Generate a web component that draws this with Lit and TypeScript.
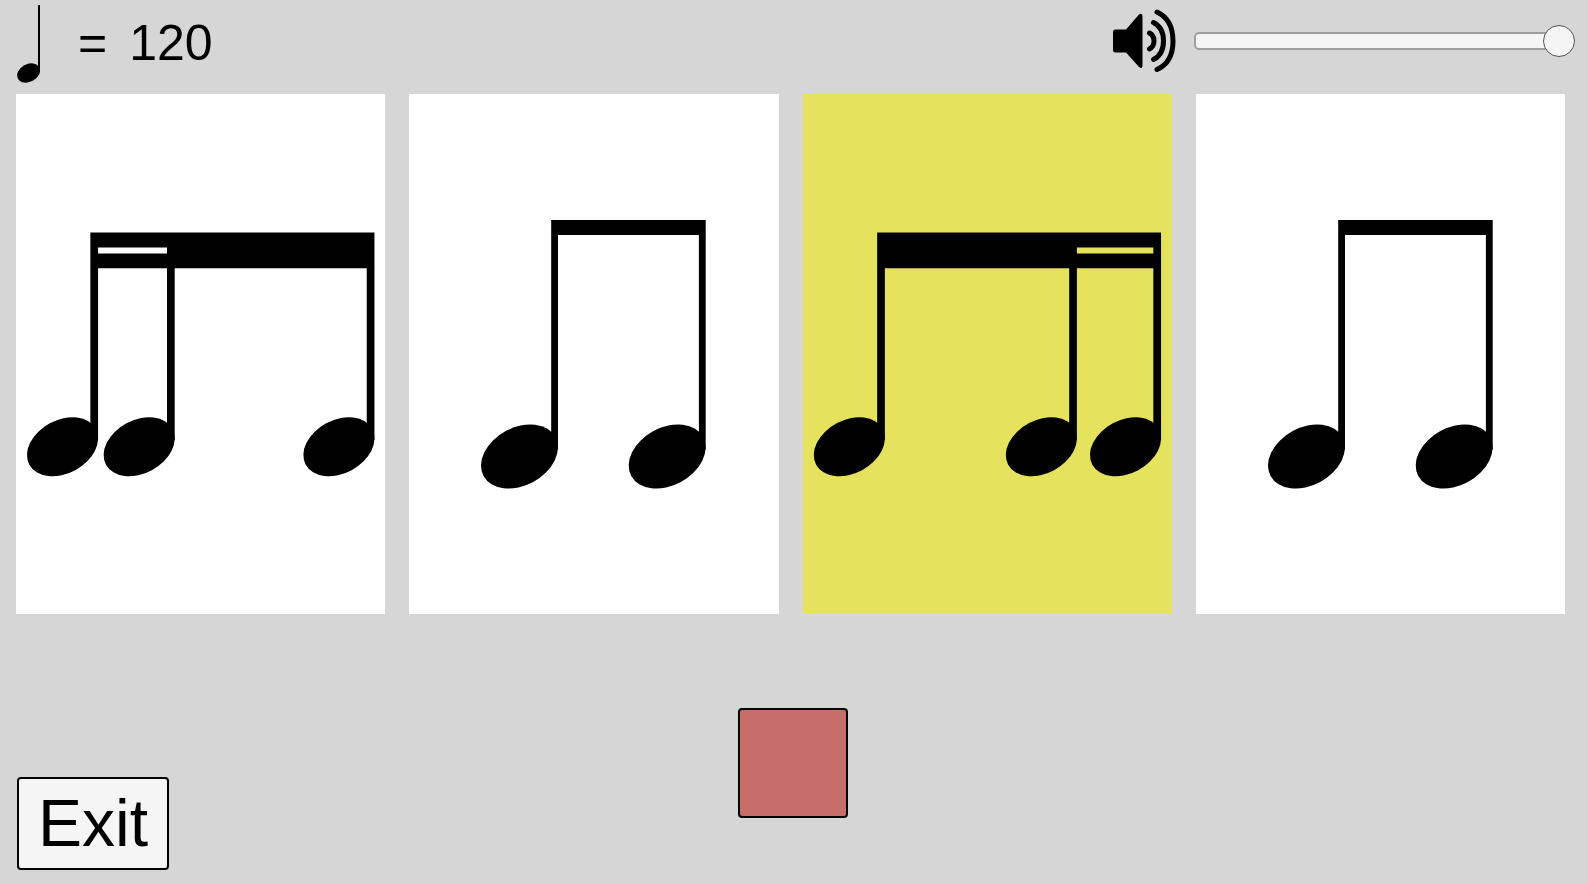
import { LitElement, html, svg, css } from "lit";
import { customElement, property, state } from "lit/decorators.js";
import { classMap } from "lit/directives/class-map.js";

interface Figure {
  /** Right edge of each stem. */
  stems: number[];
  stemWidth: number;
  top: number;
  beam: number;
  headY: number;
  headX: number;
  rx: number;
  ry: number;
  /** Gap between the double beams of the sixteenths. */
  slot?: { x: number; width: number };
}

const sixteenths = { stemWidth: 7.7, top: 138.4, beam: 35.8, headY: 352.5, headX: 35.5, rx: 37.7, ry: 26.7 };

const FIGURES: Record<string, Figure> = {
  sixteenthsEighth: { ...sixteenths, stems: [82, 158.6, 358.2], slot: { x: 82, width: 68.9 } },
  eighthSixteenths: { ...sixteenths, stems: [81.8, 273.7, 357.8], slot: { x: 273.7, width: 76.4 } },
  eighths: {
    stems: [148.9, 296.5],
    stemWidth: 6.8,
    top: 125.8,
    beam: 15.2,
    headY: 362.3,
    headX: 38.5,
    rx: 40.8,
    ry: 28.9,
  },
};

@customElement("rhythm-card")
export class RhythmCard extends LitElement {
  @property() figure = "eighths";
  @property({ type: Boolean }) active = false;

  static styles = css`
    :host {
      display: block;
      min-width: 0;
    }
    .card {
      background: #ffffff;
    }
    .card.active {
      background: #e5e25e;
    }
    .score {
      display: block;
      width: 100%;
      height: auto;
    }
  `;

  private beam(f: Figure) {
    const left = f.stems[0] - f.stemWidth;
    const right = f.stems[f.stems.length - 1];
    const slot = f.slot
      ? `M${f.slot.x} ${f.top + 15}v6h${f.slot.width}v-6z`
      : "";
    return `M${left} ${f.top}H${right}v${f.beam}H${left}z${slot}`;
  }

  render() {
    const f = FIGURES[this.figure];
    const stemTop = f.top + f.beam - 0.5;
    return html`
      <div class=${classMap({ card: true, active: this.active })}>
        <svg class="score" viewBox="0 0 369 520" role="img" aria-label=${this.figure}>
          <path fill-rule="evenodd" d=${this.beam(f)} />
          ${f.stems.map(
            (x) => svg`
              <rect x=${x - f.stemWidth} y=${stemTop} width=${f.stemWidth} height=${f.headY - 7 - stemTop} />
              <ellipse rx=${f.rx} ry=${f.ry}
                transform="translate(${x - f.headX} ${f.headY}) rotate(-28.4)" />`
          )}
        </svg>
      </div>
    `;
  }
}

@customElement("app-root")
export class AppRoot extends LitElement {
  @state() private current = 2;
  @state() private volume = 100;

  private bars = ["sixteenthsEighth", "eighths", "eighthSixteenths", "eighths"];

  static styles = css`
    :host {
      display: flex;
      flex-direction: column;
      box-sizing: border-box;
      min-height: 100vh;
      background: #d6d6d6;
      color: #000000;
      font-family: "Liberation Sans", Arial, sans-serif;
    }
    .top {
      display: flex;
      align-items: flex-start;
      justify-content: space-between;
      height: 94px;
      padding: 0 12px 0 16px;
    }
    .tempo {
      display: flex;
      gap: 22px;
      padding-top: 4px;
      font-size: 50px;
      line-height: 78px;
    }
    .quarter {
      width: 40px;
      height: 80px;
    }
    .volume {
      display: flex;
      align-items: center;
      gap: 16px;
      padding-top: 8px;
    }
    .speaker {
      display: block;
      width: 66px;
      height: 66px;
    }
    .rail {
      display: grid;
      align-items: center;
      width: 24vw;
    }
    .rail::before {
      content: "";
      grid-area: 1 / 1;
      box-sizing: border-box;
      height: 18px;
      margin-right: 8px;
      border: 2px solid #9e9e9e;
      border-radius: 5px;
      background: #f5f5f5;
    }
    .slider {
      appearance: none;
      grid-area: 1 / 1;
      width: 100%;
      height: 32px;
      margin: 0;
      background: transparent;
    }
    .slider::-webkit-slider-thumb {
      appearance: none;
      box-sizing: border-box;
      width: 32px;
      height: 32px;
      border: 1px solid #555555;
      border-radius: 50%;
      background: #f5f5f5;
    }
    .bars {
      display: grid;
      grid-template-columns: repeat(4, minmax(0, 1fr));
      gap: 24px;
      padding: 0 22px 0 16px;
    }
    .bottom {
      display: grid;
      flex: 1;
      grid-template-columns: 1fr auto 1fr;
      padding: 94px 19px 14px 17px;
    }
    .stop,
    .exit {
      box-sizing: border-box;
      border: 2px solid #000000;
      border-radius: 4px;
    }
    .stop {
      width: 110px;
      height: 110px;
      background: #c76e6a;
    }
    .exit {
      align-self: end;
      justify-self: start;
      padding: 0 19px;
      background: #f5f5f5;
      color: inherit;
      font-family: inherit;
      font-size: 66px;
      line-height: 89px;
    }
  `;

  render() {
    return html`
      <header class="top">
        <div class="tempo">
          <svg class="quarter" viewBox="0 0 40 80" role="img" aria-label="Quarter note">
            <path d="M22 1h2v67h-2z" />
            <ellipse rx="12" ry="8.9" transform="translate(12.6 69) rotate(-28)" />
          </svg>
          <span>=</span>
          <span>120</span>
        </div>
        <div class="volume">
          <svg class="speaker" viewBox="0 0 66 66" aria-hidden="true">
            <path d="M3.500 21.500H14L27 6.500Q30.500 4.500 30.500 8.500V57.500Q30.500 61.500 27 59L14 44.500H3.500Q1 44.500 1 42V24Q1 21.500 3.500 21.500z" />
            <g fill="none" stroke="#000" stroke-width="5" stroke-linecap="round">
              <path d="M37.500 25Q42 27.500 42 33T37.500 41" />
              <path d="M41.500 14.500Q51.500 19.500 51.500 33T41.500 51.500" />
              <path d="M45 4Q61 11.500 61 33T45 61.500" />
            </g>
          </svg>
          <div class="rail">
            <input
              class="slider"
              type="range"
              min="0"
              max="100"
              aria-label="Volume"
              .value=${String(this.volume)}
              @input=${(e: Event) => (this.volume = Number((e.target as HTMLInputElement).value))}
            />
          </div>
        </div>
      </header>
      <main class="bars">
        ${this.bars.map(
          (figure, i) => html`<rhythm-card .figure=${figure} .active=${i === this.current}></rhythm-card>`
        )}
      </main>
      <footer class="bottom">
        <button class="exit" type="button">Exit</button>
        <button class="stop" type="button" aria-label="Stop" @click=${() => (this.current = -1)}></button>
      </footer>
    `;
  }
}
